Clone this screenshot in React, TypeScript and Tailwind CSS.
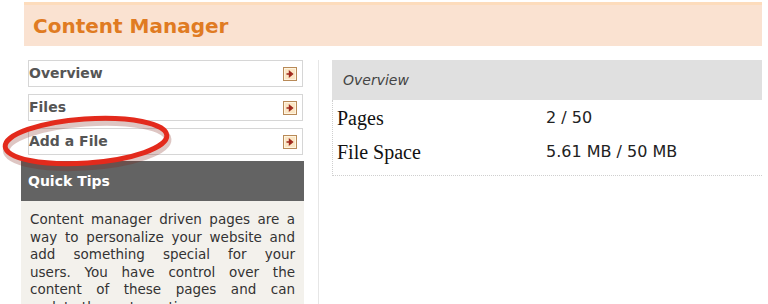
import React from 'react';

const navItems = ['Overview', 'Files', 'Add a File'];

// lines kept as in the original so the justified wrap matches
const tipLines = [
	'Content manager driven pages are a',
	'way to personalize your website and',
	'add something special for your',
	'users. You have control over the',
	'content of these pages and can',
];

function GoIcon() {
	return (
		<svg width="14" height="14" viewBox="0 0 14 14" className="shrink-0">
			<rect x="0.5" y="0.5" width="13" height="13" fill="#fbe6c4" stroke="#b88a58" />
			<rect x="1.5" y="1.5" width="11" height="11" fill="none" stroke="#fff4e0" />
			<path d="M3.5 7h4M6.5 4.5L9.5 7l-3 2.5z" stroke="#a0281c" strokeWidth="1.4" fill="#a0281c" />
		</svg>
	);
}

export default function App() {
	return (
		<div className="relative w-[768px] h-[304px] overflow-hidden bg-white font-['DejaVu_Sans',sans-serif]">
			{/* Title band */}
			<div className="ml-[24px] mt-[2px] w-[738px] h-[44px] flex items-center pl-[9px] bg-[#fae2d1] border-t-[3px] border-[#fddcbc]">
				<h1 className="text-[20px] font-bold text-[#e07b22] leading-none">Content Manager</h1>
			</div>

			<div className="mt-[14px] flex">
				{/* Sidebar */}
				<div className="ml-[21px] w-[283px] flex flex-col">
					{navItems.map((label) => (
						<div
							key={label}
							className="ml-[7px] mb-[7px] w-[275px] h-[27px] flex items-center justify-between border border-[#d6d6d6] pr-[5px] bg-white"
						>
							<span className="text-[14px] font-bold text-[#555]">{label}</span>
							<GoIcon />
						</div>
					))}
					<div className="-mt-[1px] h-[40px] flex items-center pl-[7px] bg-[#636363]">
						<span className="text-[14px] font-bold text-white">Quick Tips</span>
					</div>
					<div className="bg-[#f3f1ec] px-[9px] pt-[10px] h-[120px] text-[13.5px] leading-[17.5px] text-[#333]">
						{tipLines.map((line) => (
							<p key={line} className="text-justify [text-align-last:justify] whitespace-nowrap">
								{line}
							</p>
						))}
						<p>update them at any time.</p>
					</div>
				</div>

				{/* Divider */}
				<div className="ml-[14px] w-px h-[260px] bg-[#e6e6e6]" />

				{/* Overview panel */}
				<div className="ml-[13px] w-[430px]">
					<div className="h-[40px] flex items-center pl-[11px] bg-[#e0e0e0]">
						<span className="text-[14px] italic text-[#444]">Overview</span>
					</div>
					<div className="border-l border-b border-dotted border-[#cfcfcf] pb-[6px] pt-px">
						<div className="h-[34px] flex items-center">
							<span className="w-[213px] pl-[4px] font-['Liberation_Serif',serif] text-[20px] text-[#111]">Pages</span>
							<span className="text-[16px] text-[#222]">2 / 50</span>
						</div>
						<div className="h-[34px] flex items-center">
							<span className="w-[213px] pl-[4px] font-['Liberation_Serif',serif] text-[20px] text-[#111]">File Space</span>
							<span className="text-[16px] text-[#222]">5.61 MB / 50 MB</span>
						</div>
					</div>
				</div>
			</div>

			{/* Red annotation circle */}
			<svg className="absolute left-0 top-[110px] pointer-events-none" width="180" height="64" viewBox="0 0 180 64">
				<ellipse cx="86" cy="33" rx="81" ry="22" fill="none" stroke="#7a1a10" strokeOpacity="0.25" strokeWidth="7" transform="rotate(-4 86 33) translate(1 2)" />
				<ellipse cx="86" cy="31" rx="81" ry="22" fill="none" stroke="#e32a1c" strokeWidth="5" transform="rotate(-4 86 31)" />
			</svg>
		</div>
	);
}
